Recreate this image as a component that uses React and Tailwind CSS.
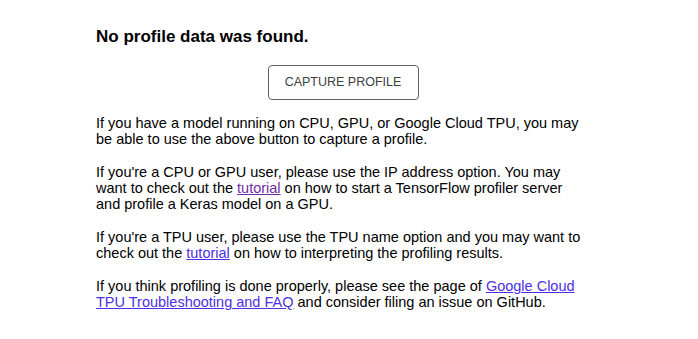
export default function App() {
  return (
    <div className="min-h-[339px] w-[698px] bg-white font-['Liberation_Sans',Arial,sans-serif] text-black">
      <div className="ml-[96px] w-[494px] pt-[27px]">
        <h1 className="text-[17px] font-bold leading-[20px]">No profile data was found.</h1>
        <div className="mt-[18px] flex justify-center">
          <button className="h-[35px] w-[151px] rounded-[4px] border border-[#5f6368] bg-white text-[12.5px] text-[#3c4043]">
            CAPTURE PROFILE
          </button>
        </div>
        <div className="mt-[15px] text-[14.5px] leading-[16px]">
          <p>
            If you have a model running on CPU, GPU, or Google Cloud TPU, you may be able to use the above button to
            capture a profile.
          </p>
          <p className="mt-[17px]">
            If you're a CPU or GPU user, please use the IP address option. You may want to check out the{" "}
            <a className="text-[#6f2ea6] underline">tutorial</a> on how to start a TensorFlow profiler server and
            profile a Keras model on a GPU.
          </p>
          <p className="mt-[17px]">
            If you're a TPU user, please use the TPU name option and you may want to check out the{" "}
            <a className="text-[#4c2fe6] underline">tutorial</a> on how to interpreting the profiling results.
          </p>
          <p className="mt-[17px]">
            If you think profiling is done properly, please see the page of{" "}
            <a className="text-[#4c2fe6] underline">Google Cloud TPU Troubleshooting and FAQ</a> and consider filing
            an issue on GitHub.
          </p>
        </div>
      </div>
    </div>
  );
}
